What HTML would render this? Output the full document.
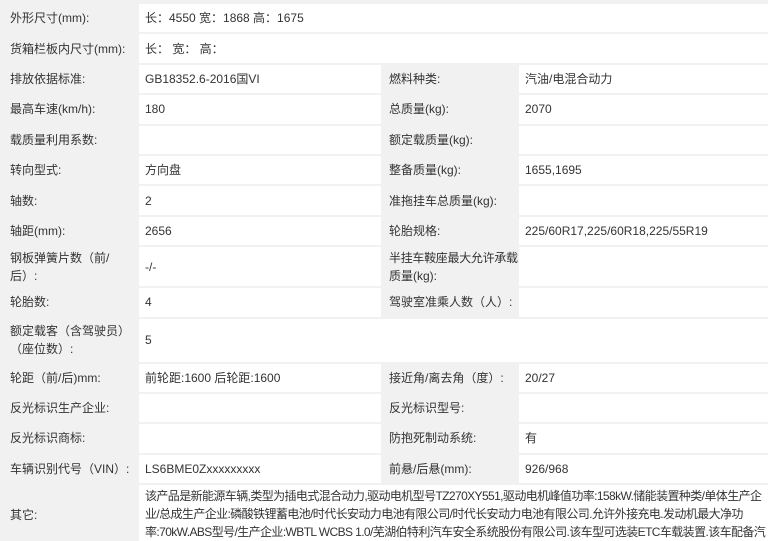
<!DOCTYPE html>
<html><head><meta charset="utf-8"><style>
html,body{margin:0;padding:0;background:#f1f1f1;width:768px;height:541px;overflow:hidden}
body{font-family:"Liberation Sans","Noto Sans CJK SC",sans-serif;font-size:12px;color:#333}
table{border-collapse:separate;border-spacing:0 2px;margin-top:2px;width:768px;table-layout:fixed}
td{padding:0 0 0 8px;vertical-align:middle;line-height:18px;height:28.4px}
td.l{background:#f1f1f1;padding-left:10px}
td.l2{background:#f1f1f1;padding-left:8px;padding-right:0}
td.v{background:#fff;padding-left:6px}
td.o{letter-spacing:-0.6px;padding-right:2px}
.nw{white-space:nowrap;letter-spacing:-0.3px}
</style></head><body>
<table>
<colgroup><col style="width:139px"><col style="width:242px"><col style="width:138px"><col style="width:249px"></colgroup>
<tr><td class="l">外形尺寸(mm):</td><td class="v" colspan="3">长：4550 宽：1868 高：1675</td></tr>
<tr><td class="l">货箱栏板内尺寸(mm):</td><td class="v" colspan="3">长： 宽： 高：</td></tr>
<tr><td class="l">排放依据标准:</td><td class="v">GB18352.6-2016国VI</td><td class="l2">燃料种类:</td><td class="v">汽油/电混合动力</td></tr>
<tr><td class="l">最高车速(km/h):</td><td class="v">180</td><td class="l2">总质量(kg):</td><td class="v">2070</td></tr>
<tr><td class="l">载质量利用系数:</td><td class="v"></td><td class="l2">额定载质量(kg):</td><td class="v"></td></tr>
<tr><td class="l">转向型式:</td><td class="v">方向盘</td><td class="l2">整备质量(kg):</td><td class="v">1655,1695</td></tr>
<tr><td class="l">轴数:</td><td class="v">2</td><td class="l2">准拖挂车总质量(kg):</td><td class="v"></td></tr>
<tr><td class="l">轴距(mm):</td><td class="v">2656</td><td class="l2">轮胎规格:</td><td class="v">225/60R17,225/60R18,225/55R19</td></tr>
<tr><td class="l" style="height:39px">钢板弹簧片数（前/<br>后）:</td><td class="v">-/-</td><td class="l2"><span class="nw">半挂车鞍座最大允许承载</span><br>质量(kg):</td><td class="v"></td></tr>
<tr><td class="l">轮胎数:</td><td class="v">4</td><td class="l2">驾驶室准乘人数（人）:</td><td class="v"></td></tr>
<tr><td class="l" style="height:43px">额定载客（含驾驶员）<br>（座位数）:</td><td class="v" colspan="3">5</td></tr>
<tr><td class="l">轮距（前/后)mm:</td><td class="v">前轮距:1600 后轮距:1600</td><td class="l2">接近角/离去角（度）:</td><td class="v">20/27</td></tr>
<tr><td class="l">反光标识生产企业:</td><td class="v"></td><td class="l2">反光标识型号:</td><td class="v"></td></tr>
<tr><td class="l">反光标识商标:</td><td class="v"></td><td class="l2">防抱死制动系统:</td><td class="v">有</td></tr>
<tr><td class="l">车辆识别代号（VIN）:</td><td class="v">LS6BME0Zxxxxxxxxx</td><td class="l2">前悬/后悬(mm):</td><td class="v">926/968</td></tr>
<tr><td class="l" style="height:60px">其它:</td><td class="v o" colspan="3" style="vertical-align:top;line-height:18px;padding-top:2px">该产品是新能源车辆,类型为插电式混合动力,驱动电机型号TZ270XY551,驱动电机峰值功率:158kW.储能装置种类/单体生产企业/总成生产企业:磷酸铁锂蓄电池/时代长安动力电池有限公司/时代长安动力电池有限公司.允许外接充电.发动机最大净功率:70kW.ABS型号/生产企业:WBTL WCBS 1.0/芜湖伯特利汽车安全系统股份有限公司.该车型可选装ETC车载装置.该车配备汽</td></tr>
</table>
</body></html>
